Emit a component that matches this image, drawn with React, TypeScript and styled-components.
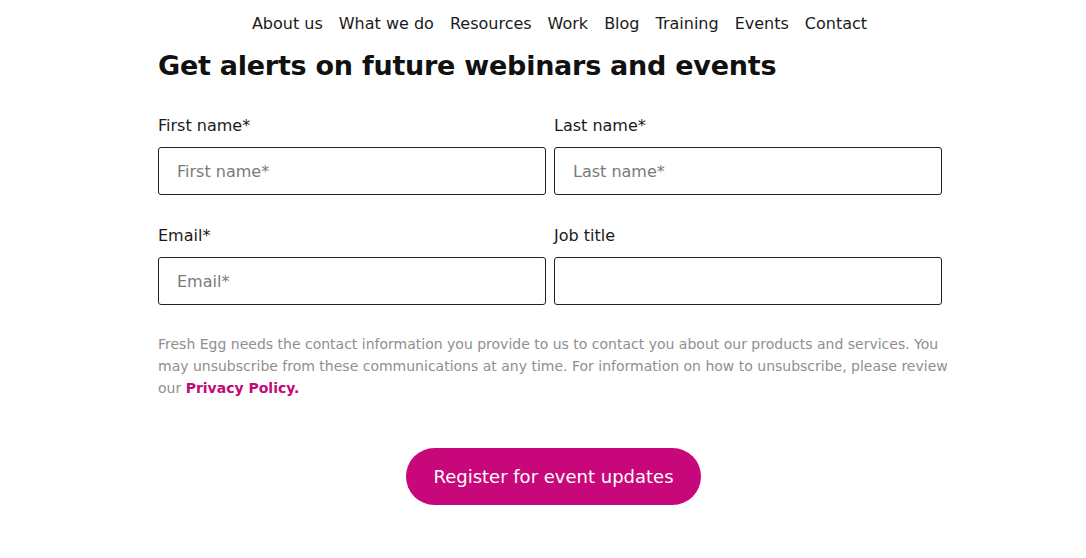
import React from 'react'
import styled, { createGlobalStyle } from 'styled-components'

const GlobalStyle = createGlobalStyle`
  html, body {
    margin: 0;
    padding: 0;
    background: #ffffff;
  }
  body {
    font-family: "DejaVu Sans", "Open Sans", sans-serif;
    color: #1a1a1a;
  }
`

const Page = styled.div`
  width: 1086px;
  min-height: 558px;
`

const Nav = styled.nav`
  display: flex;
  justify-content: center;
  gap: 16px;
  padding: 13px 0 0 33px;
  height: 22px;
`

const NavLink = styled.a`
  font-size: 16px;
  line-height: 22px;
  color: #1a1a1a;
  text-decoration: none;
`

const Content = styled.div`
  width: 784px;
  margin: 0 auto;
  padding-left: 14px;
`

const Heading = styled.h2`
  margin: 11px 0 0;
  font-size: 27px;
  line-height: 40px;
  font-weight: 700;
  color: #111111;
  letter-spacing: -0.25px;
`

const Form = styled.form`
  margin-top: 29px;
`

const Grid = styled.div`
  display: grid;
  grid-template-columns: 1fr 1fr;
  column-gap: 8px;
  row-gap: 30px;
`

const Field = styled.div`
  display: flex;
  flex-direction: column;
  gap: 10px;
`

const Label = styled.label`
  font-size: 16px;
  line-height: 22px;
  color: #1a1a1a;
`

const Input = styled.input`
  box-sizing: border-box;
  height: 48px;
  width: 100%;
  padding: 0 18px;
  border: 1px solid #222222;
  border-radius: 3px;
  font-family: inherit;
  font-size: 16px;
  color: #1a1a1a;
  background: #ffffff;
  outline: none;

  &::placeholder {
    color: #7a7a7a;
  }
`

const Notice = styled.p`
  margin: 28px 0 0;
  width: 790px;
  font-size: 14px;
  line-height: 22px;
  color: #8f8f8f;
`

const PolicyLink = styled.a`
  color: #c4087a;
  font-weight: 700;
  text-decoration: none;
`

const Actions = styled.div`
  display: flex;
  justify-content: center;
  margin-top: 49px;
  padding-left: 7px;
`

const Submit = styled.button`
  height: 57px;
  padding: 0 27px;
  border: none;
  border-radius: 29px;
  background: #c8077a;
  color: #ffffff;
  font-family: inherit;
  font-size: 18px;
  cursor: pointer;
`

const navItems = ['About us', 'What we do', 'Resources', 'Work', 'Blog', 'Training', 'Events', 'Contact']

const fields = [
  { label: 'First name*', placeholder: 'First name*' },
  { label: 'Last name*', placeholder: 'Last name*' },
  { label: 'Email*', placeholder: 'Email*' },
  { label: 'Job title', placeholder: '' },
]

export default function App() {
  return (
    <>
      <GlobalStyle />
      <Page>
        <Nav>
          {navItems.map((item) => (
            <NavLink key={item} href="#">{item}</NavLink>
          ))}
        </Nav>
        <Content>
          <Heading>Get alerts on future webinars and events</Heading>
          <Form onSubmit={(e) => e.preventDefault()}>
            <Grid>
              {fields.map((f) => (
                <Field key={f.label}>
                  <Label>{f.label}</Label>
                  <Input placeholder={f.placeholder} />
                </Field>
              ))}
            </Grid>
            <Notice>
              Fresh Egg needs the contact information you provide to us to contact you about our products and services. You may unsubscribe from these communications at any time. For information on how to unsubscribe, please review our <PolicyLink href="#">Privacy Policy.</PolicyLink>
            </Notice>
            <Actions>
              <Submit type="submit">Register for event updates</Submit>
            </Actions>
          </Form>
        </Content>
      </Page>
    </>
  )
}
